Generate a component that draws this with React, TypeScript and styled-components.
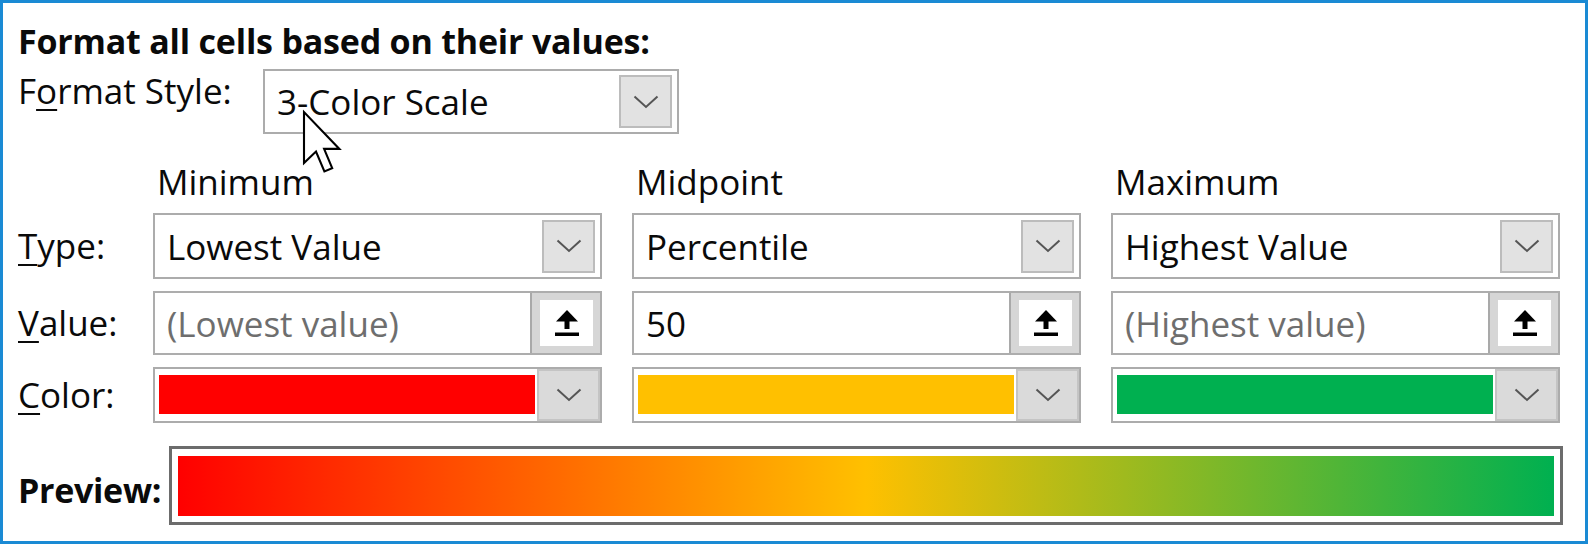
import React from "react";
import styled, { createGlobalStyle } from "styled-components";

const GlobalStyle = createGlobalStyle`
  html, body {
    margin: 0;
    padding: 0;
    background: #ffffff;
  }
`;

const Panel = styled.div`
  position: relative;
  width: 1588px;
  height: 544px;
  box-sizing: border-box;
  border: 3px solid #1a8ad4;
  background: #ffffff;
  padding: 19px 0 0 15px;
  display: flex;
  flex-direction: column;
  font-family: "Open Sans", "Noto Sans", sans-serif;
  font-size: 35px;
  color: #0a0a0a;
`;

const Title = styled.div`
  font-size: 34px;
  font-weight: 700;
  line-height: 38px;
  letter-spacing: -0.2px;
`;

const StyleRow = styled.div`
  display: flex;
  align-items: flex-start;
  margin-top: 9px;
`;

const FieldLabel = styled.div<{ $width: number; $top?: number }>`
  width: ${(p) => p.$width}px;
  flex: none;
  line-height: 38px;
  margin-top: ${(p) => p.$top ?? 0}px;
  white-space: nowrap;
`;

const Key = styled.u`
  text-decoration-thickness: 2px;
  text-underline-offset: 5px;
`;

const Combo = styled.div<{ $width?: number; $height?: number }>`
  box-sizing: border-box;
  width: ${(p) => (p.$width ? `${p.$width}px` : "auto")};
  height: ${(p) => p.$height ?? 66}px;
  border: 2px solid #acacac;
  background: #ffffff;
  display: flex;
  align-items: center;
  justify-content: space-between;
  padding: 0 5px 0 12px;
  white-space: nowrap;
`;

const DropButton = styled.div`
  width: 53px;
  height: 53px;
  box-sizing: border-box;
  background: #e2e2e2;
  border: 2px solid #bcbcbc;
  display: flex;
  align-items: center;
  justify-content: center;
  flex: none;
`;

const Grid = styled.div`
  display: grid;
  grid-template-columns: 105px repeat(3, 449px);
  grid-template-rows: 38px 66px 64px 56px;
  column-gap: 30px;
  row-gap: 12px;
  margin-top: 29px;
  align-items: center;
`;

const ColHeader = styled.div`
  line-height: 38px;
  padding-left: 4px;
  white-space: nowrap;
`;

const RowLabel = styled.div`
  line-height: 38px;
  white-space: nowrap;
`;

const ValueBox = styled.div`
  height: 64px;
  box-sizing: border-box;
  border: 2px solid #adadad;
  display: flex;
  align-items: stretch;
`;

const ValueText = styled.div<{ $placeholder?: boolean }>`
  flex: 1;
  display: flex;
  align-items: center;
  padding-left: 12px;
  color: ${(p) => (p.$placeholder ? "#6e6e6e" : "#0a0a0a")};
  white-space: nowrap;
`;

const PickButton = styled.div`
  width: 70px;
  box-sizing: border-box;
  border-left: 2px solid #a9a9a9;
  background: #d6d6d6;
  padding: 7px 7px 7px 8px;
  display: flex;
`;

const PickFace = styled.div`
  flex: 1;
  background: #ffffff;
  display: flex;
  align-items: center;
  justify-content: center;
`;

const ColorBox = styled.div`
  height: 56px;
  box-sizing: border-box;
  border: 2px solid #acacac;
  display: flex;
  align-items: stretch;
  padding-left: 4px;
  background: #ffffff;
`;

const Swatch = styled.div<{ $color: string }>`
  flex: 1;
  margin: 6px 2px 7px 0;
  background: ${(p) => p.$color};
`;

const ColorDrop = styled.div`
  width: 63px;
  background: #dadada;
  box-shadow: inset 0 0 0 2px #c4c4c4;
  display: flex;
  align-items: center;
  justify-content: center;
`;

const PreviewRow = styled.div`
  display: flex;
  align-items: center;
  margin-top: 23px;
`;

const PreviewLabel = styled.div`
  width: 151px;
  font-size: 34px;
  font-weight: 700;
  line-height: 38px;
  padding-top: 8px;
  letter-spacing: -0.3px;
`;

const PreviewFrame = styled.div`
  width: 1394px;
  height: 79px;
  box-sizing: border-box;
  border: 3px solid #6c6c6c;
  padding: 7px 6px 6px 6px;
  background: #ffffff;
`;

const PreviewBar = styled.div`
  height: 100%;
  background: linear-gradient(to right, #ff0000 0%, #ffc000 50%, #00b050 100%);
`;

const Pointer = styled.svg`
  position: absolute;
  left: 298px;
  top: 106px;
`;

const Chevron = () => (
  <svg width="26" height="14" viewBox="0 0 26 14">
    <polyline points="1.5,1.5 13,12 24.5,1.5" fill="none" stroke="#555555" strokeWidth="2" />
  </svg>
);

const UploadIcon = () => (
  <svg width="26" height="28" viewBox="0 0 26 28">
    <polygon points="13,1 24,12.5 2,12.5" fill="#000000" />
    <rect x="10.5" y="11" width="5" height="9" fill="#000000" />
    <rect x="1" y="23.5" width="24" height="3.5" fill="#000000" />
  </svg>
);

interface IColumn {
  header: string;
  type: string;
  value: string;
  placeholder: boolean;
  color: string;
}

const columns: IColumn[] = [
  { header: "Minimum", type: "Lowest Value", value: "(Lowest value)", placeholder: true, color: "#ff0000" },
  { header: "Midpoint", type: "Percentile", value: "50", placeholder: false, color: "#ffc000" },
  { header: "Maximum", type: "Highest Value", value: "(Highest value)", placeholder: true, color: "#00b050" },
];

const App = () => {
  return (
    <>
      <GlobalStyle />
      <Panel>
        <Title>Format all cells based on their values:</Title>
        <StyleRow>
          <FieldLabel $width={245} $top={3}>
            F<Key>o</Key>rmat Style:
          </FieldLabel>
          <Combo $width={416} $height={65}>
            <span>3-Color Scale</span>
            <DropButton>
              <Chevron />
            </DropButton>
          </Combo>
        </StyleRow>
        <Grid>
          <div />
          {columns.map((col) => (
            <ColHeader key={col.header}>{col.header}</ColHeader>
          ))}
          <RowLabel>
            <Key>T</Key>ype:
          </RowLabel>
          {columns.map((col) => (
            <Combo key={col.type}>
              <span>{col.type}</span>
              <DropButton>
                <Chevron />
              </DropButton>
            </Combo>
          ))}
          <RowLabel>
            <Key>V</Key>alue:
          </RowLabel>
          {columns.map((col) => (
            <ValueBox key={col.value}>
              <ValueText $placeholder={col.placeholder}>{col.value}</ValueText>
              <PickButton>
                <PickFace>
                  <UploadIcon />
                </PickFace>
              </PickButton>
            </ValueBox>
          ))}
          <RowLabel>
            <Key>C</Key>olor:
          </RowLabel>
          {columns.map((col) => (
            <ColorBox key={col.color}>
              <Swatch $color={col.color} />
              <ColorDrop>
                <Chevron />
              </ColorDrop>
            </ColorBox>
          ))}
        </Grid>
        <PreviewRow>
          <PreviewLabel>Preview:</PreviewLabel>
          <PreviewFrame>
            <PreviewBar />
          </PreviewFrame>
        </PreviewRow>
        <Pointer width="42" height="66" viewBox="0 0 14 22">
          <path
            d="M1 1 L1 18 L5 14.2 L7.8 20.8 L10.4 19.7 L7.7 13.3 L12.8 13.3 Z"
            fill="#ffffff"
            stroke="#000000"
            strokeWidth="0.7"
            strokeLinejoin="miter"
          />
        </Pointer>
      </Panel>
    </>
  );
};

export default App;
